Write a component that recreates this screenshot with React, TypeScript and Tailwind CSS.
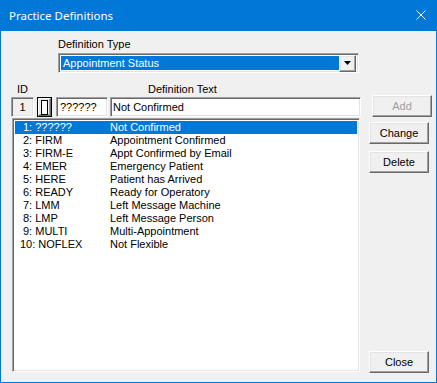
import React from "react";

const rows: [string, string][] = [
  ["1: ??????", "Not Confirmed"],
  ["2: FIRM", "Appointment Confirmed"],
  ["3: FIRM-E", "Appt Confirmed by Email"],
  ["4: EMER", "Emergency Patient"],
  ["5: HERE", "Patient has Arrived"],
  ["6: READY", "Ready for Operatory"],
  ["7: LMM", "Left Message Machine"],
  ["8: LMP", "Left Message Person"],
  ["9: MULTI", "Multi-Appointment"],
  ["10: NOFLEX", "Not Flexible"],
];

const sunken =
  "border border-t-[#a0a0a0] border-l-[#a0a0a0] border-b-white border-r-white shadow-[inset_1px_1px_0_#696969,inset_-1px_-1px_0_#e3e3e3]";
const raised =
  "border border-t-white border-l-white border-b-[#696969] border-r-[#696969] shadow-[inset_-1px_-1px_0_#a0a0a0,inset_1px_1px_0_#e3e3e3] bg-[#f0f0f0]";

const Button = ({ label, disabled }: { label: string; disabled?: boolean }) => (
  <div
    className={`${raised} w-[60px] h-[22px] flex items-center justify-center text-[11px] ${
      disabled ? "text-[#a0a0a0]" : "text-black"
    }`}
  >
    {label}
  </div>
);

export default function App() {
  return (
    <div
      className="w-[437px] h-[383px] flex flex-col bg-[#0078d7] text-[11px] text-black"
      style={{ fontFamily: '"Liberation Sans", Arial, sans-serif' }}
    >
      {/* Title bar */}
      <div className="h-[31px] flex items-center justify-between pl-[9px] pr-[11px] text-white">
        <span className="text-[11.5px]" style={{ fontFamily: '"Noto Sans", sans-serif' }}>
          Practice Definitions
        </span>
        <svg width="10" height="10" viewBox="0 0 10 10" className="mb-[1px]">
          <path d="M0.5 0.5 L9.5 9.5 M9.5 0.5 L0.5 9.5" stroke="white" strokeWidth="1" />
        </svg>
      </div>

      {/* Body */}
      <div className="flex-1 mx-[1px] mb-[1px] bg-[#f0f0f0] flex flex-col">
        <div className="pl-[57px] pt-[7px] leading-[13px]">Definition Type</div>
        <div className={`${sunken} ml-[57px] mt-[2px] w-[301px] h-[20px] bg-white flex items-center p-[2px]`}>
          <div className="flex-1 h-full bg-[#0078d7] text-white flex items-center pl-[2px] text-[11px]">
            Appointment Status
          </div>
          <div className={`${raised} w-[17px] h-[17px] flex items-center justify-center`}>
            <svg width="7" height="4" viewBox="0 0 7 4">
              <path d="M0 0 H7 L3.5 4 Z" fill="black" />
            </svg>
          </div>
        </div>

        <div className="flex mt-[10px] leading-[13px]">
          <span className="pl-[16px] w-[147px]">ID</span>
          <span>Definition Text</span>
        </div>

        <div className="flex items-start">
          <div className="flex items-center pt-[1px] pl-[10px] gap-[3px]">
            <div className={`${sunken} w-[23px] h-[20px] bg-[#f0f0f0] flex items-center justify-center`}>1</div>
            <div className="w-[15px] h-[20px] border border-black flex">
              <div className={`${raised} flex-1 flex items-center justify-center`}>
                <div className="w-[7px] h-[15px] border border-black bg-white" />
              </div>
            </div>
            <div className={`${sunken} w-[52px] h-[20px] bg-white flex items-center pl-[3px] ml-[1px]`}>??????</div>
            <div className={`${sunken} w-[251px] h-[20px] bg-white flex items-center pl-[2px] -ml-[1px]`}>
              Not Confirmed
            </div>
          </div>
          <div className="ml-[11px] -mt-[1px]">
            <Button label="Add" disabled />
          </div>
        </div>

        <div className="flex flex-1 mt-[1px] mb-[10px]">
          <div className={`${sunken} ml-[11px] w-[348px] bg-white p-[2px] pt-[2px] leading-[13px]`}>
            {rows.map(([code, text], i) => (
              <div
                key={code}
                className={`flex h-[13px] items-center ${i === 0 ? "bg-[#0078d7] text-white" : ""}`}
              >
                <span className={`w-[95px] ${i === 9 ? "pl-[5px]" : "pl-[8px]"}`}>{code}</span>
                <span>{text}</span>
              </div>
            ))}
          </div>
          <div className="ml-[9px] flex flex-col pt-[4px]">
            <div className="flex flex-col gap-[7px]">
              <Button label="Change" />
              <Button label="Delete" />
            </div>
            <div className="mt-auto mb-[-1px]">
              <Button label="Close" />
            </div>
          </div>
        </div>
      </div>
    </div>
  );
}
